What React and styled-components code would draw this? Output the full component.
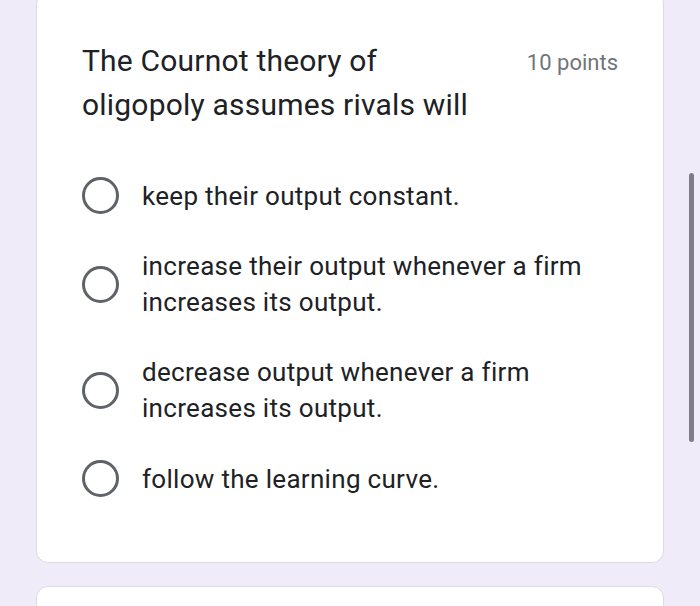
import styled, { createGlobalStyle } from 'styled-components'

const GlobalStyle = createGlobalStyle`
  html, body {
    margin: 0;
    padding: 0;
    overflow: hidden;
    background: #f0ebf8;
  }
  body {
    font-family: Roboto, 'Liberation Sans', sans-serif;
  }
`

const options = [
  'keep their output constant.',
  'increase their output whenever a firm increases its output.',
  'decrease output whenever a firm increases its output.',
  'follow the learning curve.',
]

export default function App() {
  return (
    <>
      <GlobalStyle />
      <Page>
        <Card>
          <Header>
            <Title>The Cournot theory of oligopoly assumes rivals will</Title>
            <Points>10 points</Points>
          </Header>
          <OptionList>
            {options.map(text => (
              <Option key={text}>
                <Radio />
                <OptionText>{text}</OptionText>
              </Option>
            ))}
          </OptionList>
        </Card>
        <Card $next />
      </Page>
      <ScrollThumb />
    </>
  )
}

const Page = styled.main`
  display: flex;
  flex-direction: column;
  gap: 23px;
  padding: 0 36px;
  margin-top: -8px;
`

const Card = styled.section`
  background: #fff;
  border: 1px solid #dadce0;
  border-radius: 12px;
  padding: ${p => (p.$next ? '0' : '46px 45px 65px')};
  height: ${p => (p.$next ? '120px' : 'auto')};
`

const Header = styled.header`
  display: flex;
  justify-content: space-between;
  align-items: flex-start;
`

const Title = styled.h1`
  max-width: 400px;
  margin: 0;
  font-size: 30px;
  letter-spacing: 0.2px;
  line-height: 44px;
  font-weight: 400;
  color: #202124;
`

const Points = styled.span`
  flex-shrink: 0;
  font-size: 22px;
  line-height: 46px;
  padding-top: 1px;
  color: #70757a;
`

const OptionList = styled.div`
  display: flex;
  flex-direction: column;
  gap: 34px;
  margin-top: 50px;
`

const Option = styled.label`
  display: flex;
  align-items: center;
  gap: 23px;
`

const Radio = styled.span`
  flex-shrink: 0;
  box-sizing: border-box;
  width: 37px;
  height: 37px;
  border: 3.6px solid #5f6368;
  border-radius: 50%;
`

const OptionText = styled.span`
  font-size: 26px;
  letter-spacing: 0.3px;
  line-height: 36px;
  color: #202124;
`

const ScrollThumb = styled.div`
  position: fixed;
  top: 173px;
  right: 6px;
  width: 5px;
  height: 269px;
  border-radius: 3px;
  background: #7f7b87;
`
